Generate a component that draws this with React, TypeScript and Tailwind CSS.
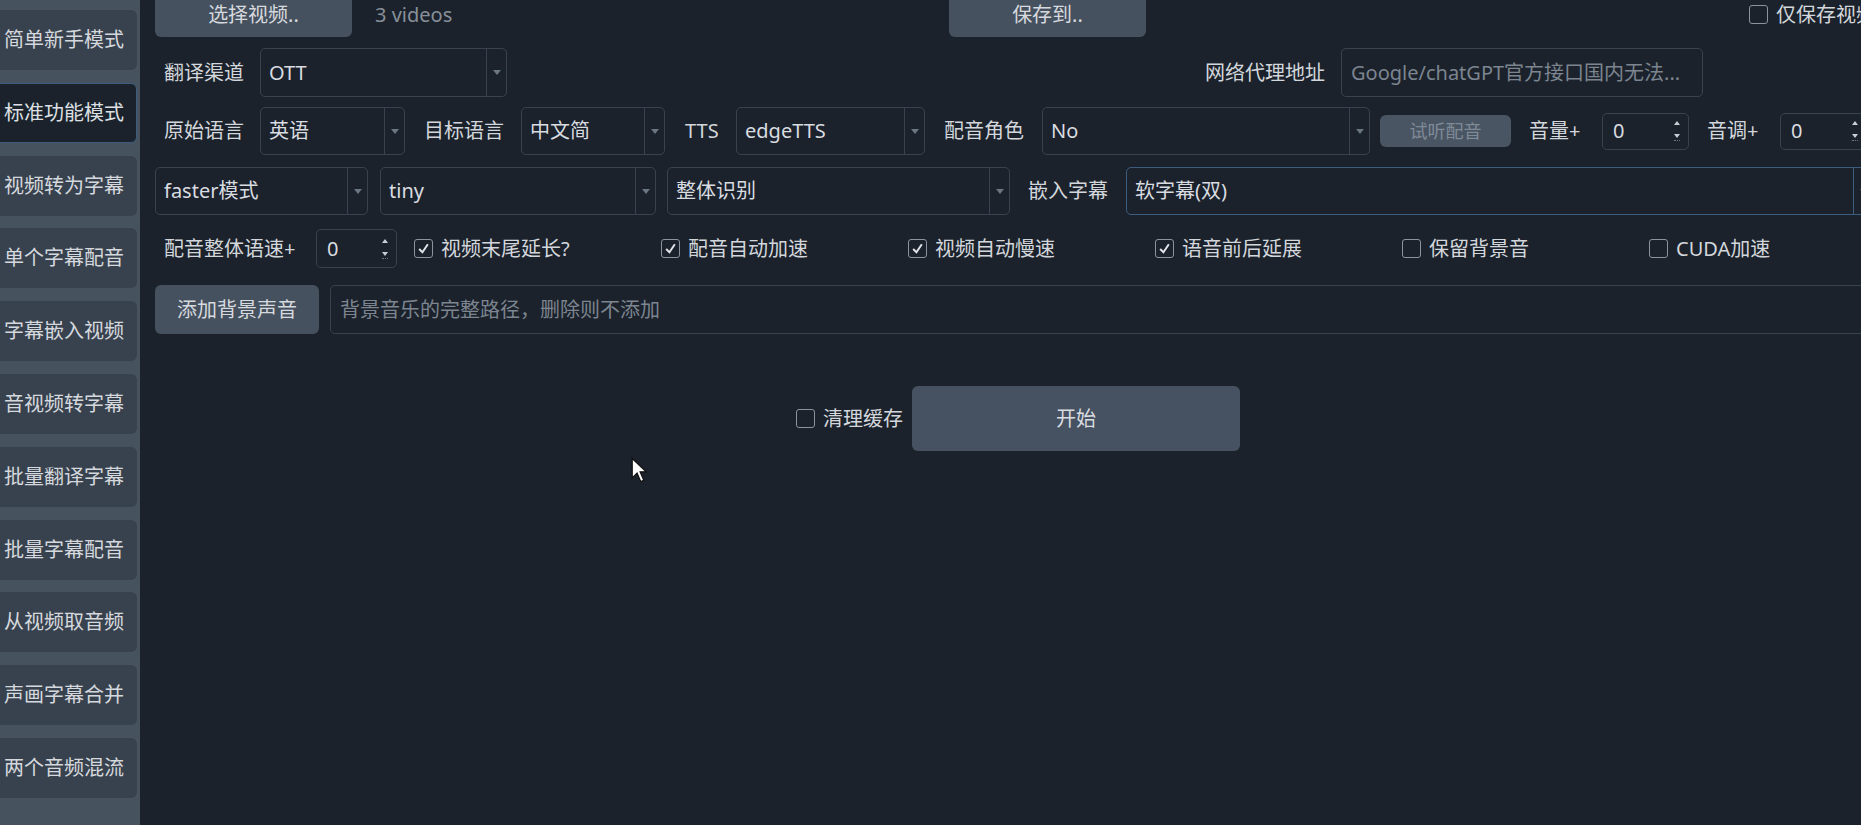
import React from "react";

const FONT = "font-['Noto_Sans','Noto_Sans_CJK_SC',sans-serif]";

const MODES = [
  "简单新手模式",
  "标准功能模式",
  "视频转为字幕",
  "单个字幕配音",
  "字幕嵌入视频",
  "音视频转字幕",
  "批量翻译字幕",
  "批量字幕配音",
  "从视频取音频",
  "声画字幕合并",
  "两个音频混流",
];

function Arrow() {
  return (
    <svg width="8" height="5" viewBox="0 0 8 5">
      <path d="M0 0 L8 0 L4 5 Z" fill="#6b7683" />
    </svg>
  );
}

function Select({
  value,
  className,
  focus,
}: {
  value: string;
  className: string;
  focus?: boolean;
}) {
  return (
    <div
      className={
        "flex shrink-0 items-stretch rounded-[5px] border " +
        (focus ? "border-[#3d5d80] " : "border-[#39434f] ") +
        className
      }
    >
      <span className="flex flex-1 items-center pl-[8px] text-[#d9dce0]">{value}</span>
      <span
        className={
          "flex w-[20px] items-center justify-center border-l " +
          (focus ? "border-[#3d5d80]" : "border-[#39434f]")
        }
      >
        <Arrow />
      </span>
    </div>
  );
}

function Spin({ className }: { className: string }) {
  return (
    <div
      className={
        "flex shrink-0 items-center rounded-[5px] border border-[#39434f] " + className
      }
    >
      <span className="flex-1 pl-[10px] text-[#d9dce0]">0</span>
      <span className="mr-[8px] flex flex-col items-center gap-[9px] border-b border-dotted border-[#6d7784] pb-[2px]">
        <svg width="6" height="4" viewBox="0 0 6 4">
          <path d="M0 4 L6 4 L3 0 Z" fill="#c9ced4" />
        </svg>
        <svg width="6" height="4" viewBox="0 0 6 4">
          <path d="M0 0 L6 0 L3 4 Z" fill="#c9ced4" />
        </svg>
      </span>
    </div>
  );
}

function Check({ label, checked }: { label: string; checked?: boolean }) {
  return (
    <div className="flex items-center gap-[8px] whitespace-nowrap">
      <span className="flex h-[19px] w-[19px] shrink-0 items-center justify-center rounded-[3px] border-[1.5px] border-[#8b949e]">
        {checked && (
          <svg width="13" height="13" viewBox="0 0 12 12">
            <path d="M2 6.5 L5 9.5 L10 2" fill="none" stroke="#e1e4e8" strokeWidth="1.8" />
          </svg>
        )}
      </span>
      <span className="text-[#d3d7dc]">{label}</span>
    </div>
  );
}

function Label({ text, className }: { text: string; className: string }) {
  return <span className={"shrink-0 whitespace-nowrap text-[#d3d7dc] " + className}>{text}</span>;
}

export default function App() {
  return (
    <div className={"flex h-[825px] w-[1861px] overflow-hidden text-[20px] " + FONT}>
      {/* Sidebar */}
      <aside className="flex w-[140px] shrink-0 flex-col gap-[12.8px] overflow-hidden bg-[#47525f] pt-[10px]">
        {MODES.map((m, i) =>
          i === 1 ? (
            <button
              key={m}
              className="-ml-[9px] flex h-[60px] w-[146px] shrink-0 items-center justify-center rounded-md border border-[#3d5d80] bg-[#1b222b] text-[#dde0e4]"
            >
              {m}
            </button>
          ) : (
            <button
              key={m}
              className="-ml-[9px] flex h-[60px] w-[146px] shrink-0 items-center justify-center rounded-md bg-[#38424e] text-[#d5d9de]"
            >
              {m}
            </button>
          )
        )}
      </aside>

      {/* Main */}
      <main className="relative flex flex-1 flex-col overflow-hidden bg-[#1b222b] pl-[15px]">
        {/* Top row */}
        <div className="-mt-[8px] flex h-[45px] shrink-0 items-center whitespace-nowrap">
          <div className="flex h-full w-[794px] shrink-0 items-center">
            <button className="h-full w-[197px] rounded-md bg-[#46515f] text-[#d6d9de]">选择视频..</button>
            <span className="ml-[23px] text-[#87909a]">3 videos</span>
          </div>
          <button className="h-full w-[197px] shrink-0 rounded-md bg-[#46515f] text-[#d6d9de]">保存到..</button>
          <div className="ml-[603px] shrink-0">
            <Check label="仅保存视频" />
          </div>
        </div>

        {/* Translate channel + proxy */}
        <div className="mt-[11px] flex h-[49px] shrink-0 items-stretch">
          <Label text="翻译渠道" className="ml-[9px] flex w-[96px] items-center" />
          <Select value="OTT" className="w-[247px]" />
          <Label text="网络代理地址" className="ml-[698px] flex w-[136px] items-center" />
          <div className="flex w-[362px] shrink-0 items-center rounded-[5px] border border-[#39434f] pl-[9px] text-[#7c8590]">
            Google/chatGPT官方接口国内无法...
          </div>
        </div>

        {/* Languages / TTS row */}
        <div className="mt-[10px] flex h-[48px] shrink-0 items-center">
          <Label text="原始语言" className="ml-[9px] w-[96px]" />
          <Select value="英语" className="h-full w-[145px]" />
          <Label text="目标语言" className="w-[116px] pl-[19px]" />
          <Select value="中文简" className="h-full w-[144px]" />
          <Label text="TTS" className="w-[71px] pl-[20px]" />
          <Select value="edgeTTS" className="h-full w-[189px]" />
          <Label text="配音角色" className="w-[117px] pl-[19px]" />
          <Select value="No" className="h-full w-[328px]" />
          <button className="ml-[10px] h-[32px] w-[131px] shrink-0 rounded-md bg-[#4a5563] text-[18px] text-[#7f8a97]">
            试听配音
          </button>
          <Label text="音量+" className="w-[91px] pl-[18px]" />
          <Spin className="h-[37px] w-[87px]" />
          <Label text="音调+" className="w-[91px] pl-[18px]" />
          <Spin className="h-[37px] w-[87px]" />
        </div>

        {/* Recognition row */}
        <div className="mt-[12px] flex h-[48px] shrink-0 items-center">
          <Select value="faster模式" className="h-full w-[213px]" />
          <Select value="tiny" className="ml-[12px] h-full w-[276px]" />
          <Select value="整体识别" className="ml-[11px] h-full w-[343px]" />
          <Label text="嵌入字幕" className="w-[116px] pl-[18px]" />
          <Select value="软字幕(双)" className="h-full w-[748px]" focus />
        </div>

        {/* Options row */}
        <div className="mt-[14px] flex h-[39px] shrink-0 items-center">
          <Label text="配音整体语速+" className="ml-[9px] w-[152px]" />
          <Spin className="h-full w-[81px]" />
          <div className="ml-[17px] flex">
            <div className="w-[247px] shrink-0">
              <Check label="视频末尾延长?" checked />
            </div>
            <div className="w-[247px] shrink-0">
              <Check label="配音自动加速" checked />
            </div>
            <div className="w-[247px] shrink-0">
              <Check label="视频自动慢速" checked />
            </div>
            <div className="w-[247px] shrink-0">
              <Check label="语音前后延展" checked />
            </div>
            <div className="w-[247px] shrink-0">
              <Check label="保留背景音" />
            </div>
            <div className="w-[247px] shrink-0">
              <Check label="CUDA加速" />
            </div>
          </div>
        </div>

        {/* Background music row */}
        <div className="mt-[17px] flex h-[49px] shrink-0 items-stretch">
          <button className="w-[164px] shrink-0 rounded-md bg-[#46515f] text-[#d6d9de]">添加背景声音</button>
          <div className="ml-[11px] flex w-[1560px] shrink-0 items-center rounded-[5px] border border-[#39434f] pl-[9px] text-[#7c8590]">
            背景音乐的完整路径，删除则不添加
          </div>
        </div>

        {/* Start row */}
        <div className="mt-[52px] flex h-[65px] shrink-0 items-center">
          <div className="ml-[641px] w-[116px] shrink-0">
            <Check label="清理缓存" />
          </div>
          <button className="h-full w-[328px] shrink-0 rounded-md bg-[#465261] text-[#d9dce0]">开始</button>
        </div>

        {/* Mouse pointer */}
        <svg
          className="pointer-events-none absolute left-[491px] top-[457px]"
          width="17"
          height="26"
          viewBox="0 0 14 21"
        >
          <path
            d="M1 1 L1 17 L5 13 L8 20 L10.5 19 L7.5 12 L12.5 12 Z"
            fill="#ffffff"
            stroke="#111111"
            strokeWidth="1"
          />
        </svg>
      </main>
    </div>
  );
}
